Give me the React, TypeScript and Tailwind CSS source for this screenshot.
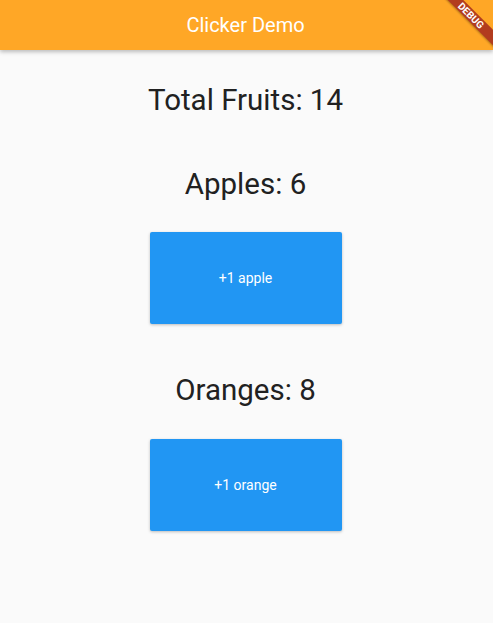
import React, { useState } from 'react';

const FONT = { fontFamily: 'Roboto, "Liberation Sans", sans-serif' };

const App: React.FC = () => {
  const [apples, setApples] = useState(6);
  const [oranges, setOranges] = useState(8);

  return (
    <div className="relative w-[493px] h-[623px] overflow-hidden bg-[#fafafa]" style={FONT}>
      <header className="relative z-10 h-[50px] pr-[2px] bg-[#ffa726] shadow-[0_2px_4px_rgba(0,0,0,0.25)] flex items-center justify-center">
        <h1 className="text-[20px] text-white leading-none">Clicker Demo</h1>
      </header>

      {/* debug banner */}
      <div className="absolute z-20 left-[430px] top-[10px] w-[82px] h-[11px] rotate-45 bg-[#b23c1f] shadow-[0_1px_2px_rgba(0,0,0,0.3)] flex items-center justify-center">
        <span className="text-[10px] font-bold text-white leading-none">DEBUG</span>
      </div>

      <main className="pr-[2px] flex flex-col items-center text-[#212121]">
        <div className="mt-[33px] text-[29.5px] leading-[34px]">Total Fruits: {apples + oranges}</div>

        <div className="mt-[50px] text-[29.5px] leading-[34px]">Apples: {apples}</div>
        <button
          className="mt-[31px] w-[192px] h-[92px] rounded-[2px] bg-[#2196f3] text-white text-[14px] shadow-[0_1px_3px_rgba(0,0,0,0.25)]"
          onClick={() => setApples(apples + 1)}
        >
          +1 apple
        </button>

        <div className="mt-[49px] text-[29.5px] leading-[34px]">Oranges: {oranges}</div>
        <button
          className="mt-[32px] w-[192px] h-[92px] rounded-[2px] bg-[#2196f3] text-white text-[14px] shadow-[0_1px_3px_rgba(0,0,0,0.25)]"
          onClick={() => setOranges(oranges + 1)}
        >
          +1 orange
        </button>
      </main>
    </div>
  );
};

export default App;
